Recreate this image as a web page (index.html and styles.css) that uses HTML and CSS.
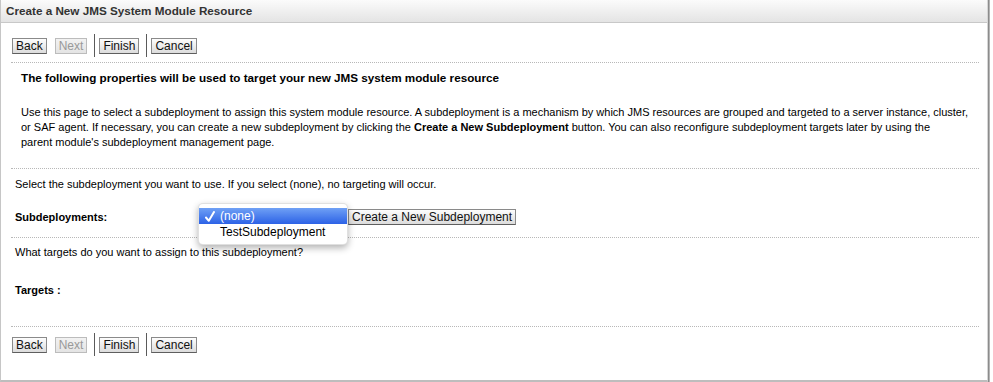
FILE: index.html
```html
<!DOCTYPE html>
<html lang="en">
<head>
    <meta charset="UTF-8">
    <title>Create a New JMS System Module Resource</title>
    <link rel="stylesheet" href="styles.css">
</head>
<body>
    <div class="panel">
        <div class="title-bar">Create a New JMS System Module Resource</div>

        <div class="button-bar top">
            <button class="btn">Back</button>
            <button class="btn" disabled>Next</button>
            <span class="sep"></span>
            <button class="btn">Finish</button>
            <span class="sep"></span>
            <button class="btn">Cancel</button>
        </div>

        <div class="rule"></div>

        <div class="intro">
            <h2>The following properties will be used to target your new JMS system module resource</h2>
            <p>Use this page to select a subdeployment to assign this system module resource. A subdeployment is a mechanism by which JMS resources are grouped and targeted to a server instance, cluster, or SAF agent. If necessary, you can create a new subdeployment by clicking the <b>Create a New Subdeployment</b> button. You can also reconfigure subdeployment targets later by using the<br>parent module's subdeployment management page.</p>
        </div>

        <div class="rule"></div>

        <p class="line select-hint">Select the subdeployment you want to use. If you select (none), no targeting will occur.</p>

        <div class="field-row">
            <span class="label">Subdeployments:</span>
            <div class="select-wrap">
                <ul class="popup">
                    <li class="selected">
                        <svg class="check" width="10" height="11" viewBox="0 0 10 11">
                            <path d="M1 6.5 L3.8 9.8 L9 1" fill="none" stroke="#fff" stroke-width="2" stroke-linecap="round" stroke-linejoin="round"/>
                        </svg>(none)
                    </li>
                    <li>TestSubdeployment</li>
                </ul>
            </div>
            <button class="btn">Create a New Subdeployment</button>
        </div>

        <div class="rule"></div>

        <p class="line targets-hint">What targets do you want to assign to this subdeployment?</p>
        <p class="line label targets">Targets :</p>

        <div class="rule"></div>

        <div class="button-bar bottom">
            <button class="btn">Back</button>
            <button class="btn" disabled>Next</button>
            <span class="sep"></span>
            <button class="btn">Finish</button>
            <span class="sep"></span>
            <button class="btn">Cancel</button>
        </div>
    </div>
</body>
</html>
```

FILE: styles.css
```css
body {
    margin: 0;
    font-family: "Liberation Sans", Arial, sans-serif;
    font-size: 11px;
    color: #000;
    background: #fff;
}
.panel {
    width: 986px;
    height: 380px;
    border-left: 1px solid #c6c6c6;
    border-right: 1px solid #d6d6d6;
    border-bottom: 2px solid #bdbdbd;
    box-shadow: 1px 0 0 #8c8c8c, 2px 0 0 #b4b4b4;
}
.title-bar {
    height: 22px;
    line-height: 22px;
    padding-left: 5px;
    border-bottom: 1px solid #c8c8c8;
    background: linear-gradient(#fbfbfb, #e4e4e4);
    color: #333;
    font-size: 11.7px;
    font-weight: bold;
}
.button-bar {
    display: flex;
    align-items: center;
    height: 23px;
    padding-left: 11px;
}
.button-bar.top {
    margin: 11px 0 5px;
}
.button-bar.bottom {
    margin-top: 6px;
}
.btn {
    height: 16px;
    margin: 0;
    padding: 0 3px;
    font-family: "Liberation Sans", Arial, sans-serif;
    font-size: 12px;
    line-height: 14px;
    color: #111;
    border: 1px solid #8a8a8a;
    border-bottom-color: #5e5e5e;
    border-radius: 0;
    background: linear-gradient(#fdfdfd, #dcdcdc);
}
.btn + .btn {
    margin-left: 8px;
}
.btn:disabled {
    color: #999;
    border-color: #bcbcbc;
    background: linear-gradient(#f2f2f2, #e4e4e4);
}
.sep {
    width: 1px;
    height: 23px;
    margin: 0 4px 0 7px;
    background: #5a5a5a;
}
.rule {
    margin: 0 8px 0 10px;
    border-top: 1px dotted #b8b8b8;
}
.intro {
    padding: 7px 18px 0 20px;
}
.intro h2 {
    margin: 0;
    font-size: 11.7px;
    line-height: 16px;
}
.intro p {
    margin: 19px 0 18px;
    line-height: 15px;
}
.line {
    margin: 0;
    padding-left: 14px;
    line-height: 15px;
}
.select-hint {
    margin-top: 8px;
}
.field-row {
    display: flex;
    align-items: center;
    height: 16px;
    margin: 17px 0 12px;
    padding-left: 14px;
}
.label {
    font-weight: bold;
}
.field-row .label {
    width: 183px;
}
.select-wrap {
    position: relative;
    width: 150px;
    height: 16px;
}
.popup {
    position: absolute;
    left: 0;
    top: -6px;
    width: 148px;
    margin: 0;
    padding: 4px 0;
    list-style: none;
    background: #fff;
    border: 1px solid rgba(0, 0, 0, 0.12);
    border-radius: 5px;
    box-shadow: 0 3px 7px rgba(0, 0, 0, 0.3);
    font-size: 12px;
    z-index: 2;
}
.popup li {
    position: relative;
    height: 16px;
    line-height: 16px;
    padding-left: 21px;
    color: #000;
}
.popup li.selected {
    color: #fff;
    background: linear-gradient(#6fa0f5, #2c62e6);
}
.check {
    position: absolute;
    left: 6px;
    top: 3px;
}
.targets-hint {
    margin-top: 7px;
}
.targets {
    margin: 23px 0 28px;
}
```
